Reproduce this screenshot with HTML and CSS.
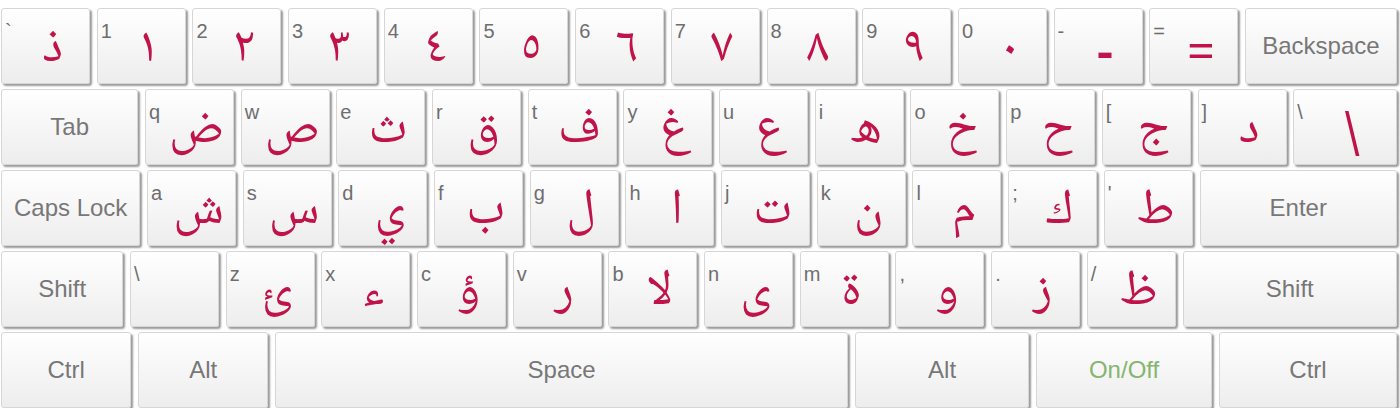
FILE: index.html
```html
<!DOCTYPE html>
<html lang="ar">
<head>
<meta charset="utf-8">
<title>Arabic Keyboard</title>
<link rel="stylesheet" href="styles.css">
</head>
<body>
<div class="kb" dir="ltr">
  <div class="row r1">
    <div class="key"><span class="lat">`</span><span class="ar">ذ</span></div>
    <div class="key"><span class="lat">1</span><span class="ar">١</span></div>
    <div class="key"><span class="lat">2</span><span class="ar">٢</span></div>
    <div class="key"><span class="lat">3</span><span class="ar">٣</span></div>
    <div class="key"><span class="lat">4</span><span class="ar">٤</span></div>
    <div class="key"><span class="lat">5</span><span class="ar">٥</span></div>
    <div class="key"><span class="lat">6</span><span class="ar">٦</span></div>
    <div class="key"><span class="lat">7</span><span class="ar">٧</span></div>
    <div class="key"><span class="lat">8</span><span class="ar">٨</span></div>
    <div class="key"><span class="lat">9</span><span class="ar">٩</span></div>
    <div class="key"><span class="lat">0</span><span class="ar">٠</span></div>
    <div class="key"><span class="lat">-</span><span class="ar sym">-</span></div>
    <div class="key"><span class="lat">=</span><span class="ar sym">=</span></div>
    <div class="key fn">Backspace</div>
  </div>
  <div class="row r2">
    <div class="key fn">Tab</div>
    <div class="key"><span class="lat">q</span><span class="ar">ض</span></div>
    <div class="key"><span class="lat">w</span><span class="ar">ص</span></div>
    <div class="key"><span class="lat">e</span><span class="ar">ث</span></div>
    <div class="key"><span class="lat">r</span><span class="ar">ق</span></div>
    <div class="key"><span class="lat">t</span><span class="ar">ف</span></div>
    <div class="key"><span class="lat">y</span><span class="ar">غ</span></div>
    <div class="key"><span class="lat">u</span><span class="ar">ع</span></div>
    <div class="key"><span class="lat">i</span><span class="ar">ه</span></div>
    <div class="key"><span class="lat">o</span><span class="ar">خ</span></div>
    <div class="key"><span class="lat">p</span><span class="ar">ح</span></div>
    <div class="key"><span class="lat">[</span><span class="ar">ج</span></div>
    <div class="key"><span class="lat">]</span><span class="ar">د</span></div>
    <div class="key"><span class="lat">\</span><span class="ar sym">\</span></div>
  </div>
  <div class="row r3">
    <div class="key fn">Caps Lock</div>
    <div class="key"><span class="lat">a</span><span class="ar">ش</span></div>
    <div class="key"><span class="lat">s</span><span class="ar">س</span></div>
    <div class="key"><span class="lat">d</span><span class="ar">ي</span></div>
    <div class="key"><span class="lat">f</span><span class="ar">ب</span></div>
    <div class="key"><span class="lat">g</span><span class="ar">ل</span></div>
    <div class="key"><span class="lat">h</span><span class="ar">ا</span></div>
    <div class="key"><span class="lat">j</span><span class="ar">ت</span></div>
    <div class="key"><span class="lat">k</span><span class="ar">ن</span></div>
    <div class="key"><span class="lat">l</span><span class="ar">م</span></div>
    <div class="key"><span class="lat">;</span><span class="ar">ك</span></div>
    <div class="key"><span class="lat">'</span><span class="ar">ط</span></div>
    <div class="key fn">Enter</div>
  </div>
  <div class="row r4">
    <div class="key fn">Shift</div>
    <div class="key"><span class="lat">\</span></div>
    <div class="key"><span class="lat">z</span><span class="ar">ئ</span></div>
    <div class="key"><span class="lat">x</span><span class="ar">ء</span></div>
    <div class="key"><span class="lat">c</span><span class="ar">ؤ</span></div>
    <div class="key"><span class="lat">v</span><span class="ar">ر</span></div>
    <div class="key"><span class="lat">b</span><span class="ar">لا</span></div>
    <div class="key"><span class="lat">n</span><span class="ar">ى</span></div>
    <div class="key"><span class="lat">m</span><span class="ar">ة</span></div>
    <div class="key"><span class="lat">,</span><span class="ar">و</span></div>
    <div class="key"><span class="lat">.</span><span class="ar">ز</span></div>
    <div class="key"><span class="lat">/</span><span class="ar">ظ</span></div>
    <div class="key fn">Shift</div>
  </div>
  <div class="row r5">
    <div class="key fn">Ctrl</div>
    <div class="key fn">Alt</div>
    <div class="key fn">Space</div>
    <div class="key fn">Alt</div>
    <div class="key fn on">On/Off</div>
    <div class="key fn">Ctrl</div>
  </div>
</div>
</body>
</html>
```

FILE: styles.css
```css
html, body {
  margin: 0;
  padding: 0;
  background: #ffffff;
}

body {
  font-family: "Liberation Sans", Arial, sans-serif;
}

.kb {
  display: flex;
  flex-direction: column;
  gap: 5px;
  width: 1396px;
  padding: 8px 0 0 1px;
}

.row {
  display: grid;
  column-gap: 6.7px;
  height: 76px;
}

.r1 { grid-template-columns: repeat(13, 89px) 1fr; }
.r2 { grid-template-columns: 137.3px repeat(12, 89px) 1fr; }
.r3 { grid-template-columns: 139.3px repeat(11, 89px) 1fr; }
.r4 { grid-template-columns: 122.3px repeat(11, 89px) 1fr; }
.r5 { grid-template-columns: 130.3px 130.3px 573.3px 174.3px 176.3px 1fr; }

.key {
  display: grid;
  grid-template-rows: 100%;
  box-sizing: border-box;
  border: 1px solid #d6d6d6;
  border-radius: 3px;
  background: linear-gradient(#ffffff, #ededed);
  box-shadow: 2px 2px 2px #9a9a9a;
}

.key > span {
  grid-area: 1 / 1;
}

.lat {
  align-self: start;
  justify-self: start;
  margin: 11px 0 0 3px;
  font-size: 20px;
  line-height: 23px;
  color: #6e6e6e;
}

.ar {
  align-self: start;
  justify-self: center;
  margin: 17px 0 0 14px;
  font-family: "Noto Naskh Arabic", "Noto Sans Arabic", "DejaVu Sans", sans-serif;
  font-size: 50px;
  line-height: 50px;
  color: #c0134a;
}

.ar.sym {
  margin-top: 30px;
  line-height: 40px;
  font-weight: bold;
}

.fn {
  place-items: center;
  font-size: 24px;
  color: #777777;
}

.on {
  color: #86b56f;
}
```
